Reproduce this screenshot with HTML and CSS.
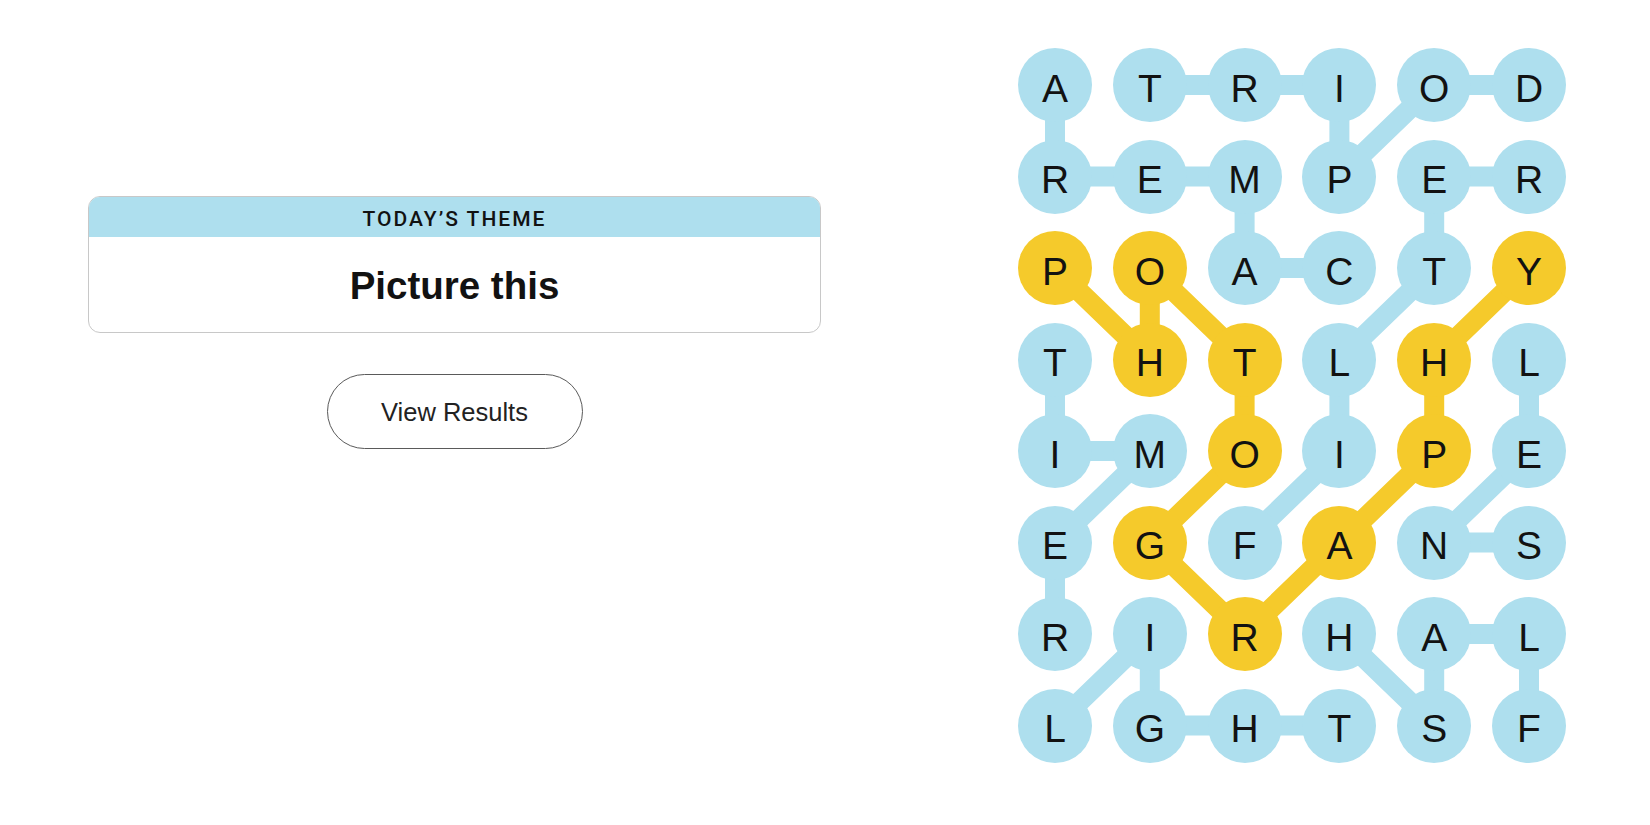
FILE: index.html
```html
<!DOCTYPE html>
<html lang="en">
<head>
<meta charset="utf-8">
<title>Strands</title>
<link rel="stylesheet" href="styles.css">
</head>
<body>
<main class="page">
  <section class="left">
    <div class="theme-card">
      <div class="theme-head">TODAY’S THEME</div>
      <div class="theme-body">Picture this</div>
    </div>
    <button class="results-btn">View Results</button>
  </section>

  <section class="board">
    <svg class="links" width="548" height="715" viewBox="0 0 548 715" aria-hidden="true">
      <g class="found">
        <polyline points="131.8,37 226.6,37 321.4,37 321.4,128.5 416.2,37 511,37"/>
        <polyline points="321.4,220 226.6,220 226.6,128.5 131.8,128.5 37,128.5 37,37"/>
        <polyline points="226.6,494.5 321.4,403 321.4,311.5 416.2,220 416.2,128.5 511,128.5"/>
        <polyline points="37,311.5 37,403 131.8,403 37,494.5 37,586"/>
        <polyline points="511,311.5 511,403 416.2,494.5 511,494.5"/>
        <polyline points="37,677.5 131.8,586 131.8,677.5 226.6,677.5 321.4,677.5"/>
        <polyline points="511,677.5 511,586 416.2,586 416.2,677.5 321.4,586"/>
      </g>
      <g class="spangram">
        <polyline points="37,220 131.8,311.5 131.8,220 226.6,311.5 226.6,403 131.8,494.5 226.6,586 321.4,494.5 416.2,403 416.2,311.5 511,220"/>
      </g>
    </svg>
    <div class="grid">
      <div class="cell">A</div><div class="cell">T</div><div class="cell">R</div><div class="cell">I</div><div class="cell">O</div><div class="cell">D</div>
      <div class="cell">R</div><div class="cell">E</div><div class="cell">M</div><div class="cell">P</div><div class="cell">E</div><div class="cell">R</div>
      <div class="cell span">P</div><div class="cell span">O</div><div class="cell">A</div><div class="cell">C</div><div class="cell">T</div><div class="cell span">Y</div>
      <div class="cell">T</div><div class="cell span">H</div><div class="cell span">T</div><div class="cell">L</div><div class="cell span">H</div><div class="cell">L</div>
      <div class="cell">I</div><div class="cell">M</div><div class="cell span">O</div><div class="cell">I</div><div class="cell span">P</div><div class="cell">E</div>
      <div class="cell">E</div><div class="cell span">G</div><div class="cell">F</div><div class="cell span">A</div><div class="cell">N</div><div class="cell">S</div>
      <div class="cell">R</div><div class="cell">I</div><div class="cell span">R</div><div class="cell">H</div><div class="cell">A</div><div class="cell">L</div>
      <div class="cell">L</div><div class="cell">G</div><div class="cell">H</div><div class="cell">T</div><div class="cell">S</div><div class="cell">F</div>
    </div>
  </section>
</main>
</body>
</html>
```

FILE: styles.css
```css
* { box-sizing: border-box; }

html, body {
  margin: 0;
  background: #ffffff;
  color: #121212;
  font-family: "Liberation Sans", Arial, sans-serif;
}

.page {
  display: flex;
  align-items: flex-start;
  padding: 48px 0 0 88px;
  width: 1650px;
  height: 825px;
}

.left {
  width: 733px;
  margin-top: 148px;
  display: flex;
  flex-direction: column;
  align-items: center;
}

.theme-card {
  width: 100%;
  border: 1px solid #c8c8c8;
  border-radius: 12px;
  overflow: hidden;
}

.theme-head {
  height: 40px;
  background: #aedfee;
  display: flex;
  align-items: center;
  justify-content: center;
  font-family: "Roboto", "Liberation Sans", sans-serif;
  font-weight: 500;
  font-size: 21px;
  letter-spacing: 2px;
  padding-top: 3px;
  color: #121212;
}

.theme-body {
  height: 95px;
  display: flex;
  align-items: center;
  justify-content: center;
  font-weight: 700;
  font-size: 38.5px;
  padding-top: 2px;
}

.results-btn {
  margin-top: 41px;
  width: 256px;
  height: 75px;
  border: 1px solid #5a5a5a;
  border-radius: 40px;
  background: #fff;
  font-family: "Liberation Sans", Arial, sans-serif;
  font-size: 25.5px;
  color: #222222;
  padding: 2px 0 0;
}

.board {
  position: relative;
  margin-left: 197px;
  width: 548px;
  height: 715px;
}

.links {
  position: absolute;
  left: 0;
  top: 0;
}

.links polyline {
  fill: none;
  stroke-width: 20;
  stroke-linejoin: round;
}

.found polyline { stroke: #aedfee; }
.spangram polyline { stroke: #f5ca2b; }

.grid {
  position: relative;
  display: grid;
  grid-template-columns: repeat(6, 74px);
  grid-template-rows: repeat(8, 74px);
  column-gap: 20.8px;
  row-gap: 17.5px;
}

.cell {
  width: 74px;
  height: 74px;
  border-radius: 50%;
  background: #aedfee;
  display: flex;
  align-items: center;
  justify-content: center;
  font-size: 39px;
  color: #121212;
  padding-top: 7px;
}

.cell.span { background: #f5ca2b; }
```
